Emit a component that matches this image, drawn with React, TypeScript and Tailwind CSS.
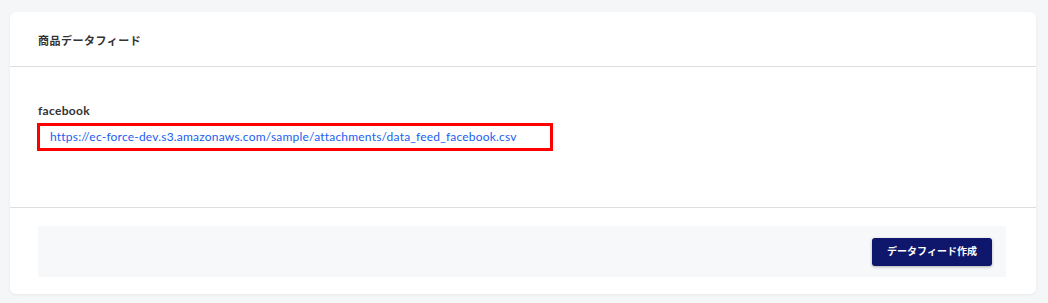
import React from "react";

export default function App() {
  const font = { fontFamily: 'Lato, "Noto Sans CJK JP", sans-serif' };
  return (
    <div className="w-[1048px] h-[303px] bg-[#f4f6f8] pt-[12px] pl-[10px]" style={font}>
      <div className="w-[1026px] h-[282px] bg-white rounded-[6px] shadow-[0_1px_3px_rgba(0,0,0,0.06)] flex flex-col">
        <div className="h-[55px] shrink-0 border-b border-[#dedede] flex items-center pl-[28px] pt-[4px]">
          <span className="text-[11px] font-semibold text-[#333333] tracking-[0.5px]">商品データフィード</span>
        </div>
        <div className="h-[141px] shrink-0 border-b border-[#dedede] pt-[37px] pl-[27px]">
          <div className="text-[12px] font-bold text-[#333333] leading-[14px] pl-[1px] tracking-[0.3px]">facebook</div>
          <div className="mt-[5px] w-[516px] h-[28px] border-[3px] border-[#ff0000] flex items-center pl-[10px]">
            <a className="text-[12px] text-[#1a5ef0] leading-none tracking-[0.2px]" href="#">
              https://ec-force-dev.s3.amazonaws.com/sample/attachments/data_feed_facebook.csv
            </a>
          </div>
        </div>
        <div className="flex-1 pt-[18px] pl-[28px] pr-[30px]">
          <div className="h-[51px] bg-[#f7f8fa] flex items-center justify-end pr-[14px]">
            <button className="w-[120px] h-[28px] rounded-[3px] bg-[#0e176b] text-white text-[10px] font-bold shadow-[0_1px_3px_rgba(0,0,0,0.3)]">
              データフィード作成
            </button>
          </div>
        </div>
      </div>
    </div>
  );
}
